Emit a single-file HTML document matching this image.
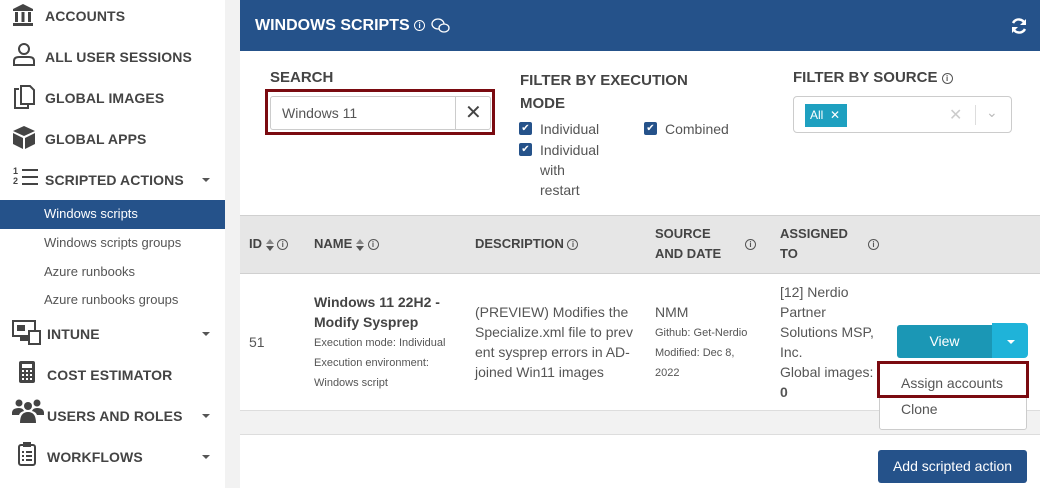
<!DOCTYPE html>
<html><head><meta charset="utf-8"><style>
*{box-sizing:border-box;margin:0;padding:0}
body{width:1040px;height:488px;overflow:hidden;font-family:"Liberation Sans",sans-serif;color:#444;background:#fff;position:relative}
.abs{position:absolute}
.side{left:0;top:0;width:225px;height:488px;background:#fff}
.gap{left:225px;top:0;width:15px;height:488px;background:#f2f2f2}
.nav{position:absolute;left:45px;font-weight:bold;font-size:14px;color:#444;letter-spacing:0.1px}
.sub{position:absolute;left:44px;font-size:13px;color:#555}
.caret{position:absolute;left:202px;width:0;height:0;border-left:4px solid transparent;border-right:4px solid transparent;border-top:4px solid #555}
.ic{position:absolute;left:12px}
.hdr{left:240px;top:0;width:800px;height:51px;background:#25528a;color:#fff}
.lbl{font-weight:bold;font-size:15px;color:#444;position:absolute}
.th{position:absolute;font-weight:bold;font-size:13px;color:#444;line-height:20px}
.info{display:inline-block;width:11px;height:11px;border:1px solid #555;border-radius:50%;font-size:8px;line-height:9px;text-align:center;font-weight:bold;vertical-align:middle;color:#555}
.cb{position:absolute;width:13px;height:13px;background:#25528a;border-radius:2px;color:#fff;font-size:10px;line-height:13px;text-align:center}
.t{position:absolute;font-size:14px;color:#555;line-height:20px}
.s{position:absolute;font-size:11px;color:#555;line-height:20px}
.sort{display:inline-block;vertical-align:middle;width:8px;height:12px;position:relative}
.sort:before{content:"";position:absolute;left:0;top:0;border-left:4px solid transparent;border-right:4px solid transparent;border-bottom:5px solid #888}
.sort:after{content:"";position:absolute;left:0;top:7px;border-left:4px solid transparent;border-right:4px solid transparent;border-top:5px solid #555}
</style></head><body>
<div class="abs side"></div><div class="abs gap"></div>
<svg class="ic" style="top:3px" width="22" height="24" viewBox="0 0 22 24"><path d="M11 1 L21 6 L21 8 L1 8 L1 6Z" fill="#444"/><rect x="3" y="9" width="3" height="10" fill="#444"/><rect x="9.5" y="9" width="3" height="10" fill="#444"/><rect x="16" y="9" width="3" height="10" fill="#444"/><rect x="1" y="20" width="20" height="3" fill="#444"/></svg>
<div class="nav" style="top:8px">ACCOUNTS</div>
<svg class="ic" style="top:42px" width="24" height="24" viewBox="0 0 24 24"><circle cx="12" cy="7" r="5" fill="none" stroke="#444" stroke-width="2"/><path d="M2 23 V19 Q2 15 7 15 H17 Q22 15 22 19 V23Z" fill="none" stroke="#444" stroke-width="2"/></svg>
<div class="nav" style="top:49px">ALL USER SESSIONS</div>
<svg class="ic" style="top:84px" width="24" height="26" viewBox="0 0 24 26"><path d="M7 5 H3 V24 H16 V21" fill="none" stroke="#444" stroke-width="2"/><path d="M9 2 H18 L22 6 V20 H9Z" fill="none" stroke="#444" stroke-width="2"/></svg>
<div class="nav" style="top:90px">GLOBAL IMAGES</div>
<svg class="ic" style="top:124px" width="24" height="26" viewBox="0 0 24 26"><path d="M12 2 L23 7 L12 12 L1 7Z M1 9 L11 14 V25 L1 20Z M23 9 L13 14 V25 L23 20Z" fill="#444"/></svg>
<div class="nav" style="top:131px">GLOBAL APPS</div>
<div class="abs" style="left:13px;top:166px;font-size:9px;font-weight:bold;line-height:10px;color:#444">1<br>2</div>
<svg class="ic" style="top:167px;left:22px" width="16" height="20"><rect x="0" y="2" width="16" height="2" fill="#444"/><rect x="0" y="9" width="16" height="2" fill="#444"/><rect x="0" y="16" width="16" height="2" fill="#444"/></svg>
<div class="nav" style="top:172px">SCRIPTED ACTIONS</div><div class="caret" style="top:178px"></div>
<div class="abs" style="left:0;top:200px;width:225px;height:29px;background:#25528a"></div>
<div class="sub" style="top:206px;color:#fff">Windows scripts</div>
<div class="sub" style="top:235px">Windows scripts groups</div>
<div class="sub" style="top:264px">Azure runbooks</div>
<div class="sub" style="top:292px">Azure runbooks groups</div>
<svg class="ic" style="top:320px" width="30" height="26" viewBox="0 0 30 26"><rect x="1" y="1" width="22" height="15" fill="none" stroke="#444" stroke-width="2"/><rect x="8" y="17" width="8" height="4" fill="#444"/><rect x="5" y="5" width="8" height="6" fill="#444"/><rect x="17" y="11" width="11" height="13" fill="#fff" stroke="#444" stroke-width="2"/></svg>
<div class="nav" style="top:326px;left:47px">INTUNE</div><div class="caret" style="top:332px"></div>
<svg class="ic" style="top:360px;left:18px" width="18" height="24" viewBox="0 0 18 24"><rect x="1" y="1" width="16" height="22" rx="2" fill="#444"/><rect x="4" y="4" width="10" height="4" fill="#fff"/><g fill="#fff"><rect x="4" y="10" width="2" height="2"/><rect x="8" y="10" width="2" height="2"/><rect x="12" y="10" width="2" height="2"/><rect x="4" y="14" width="2" height="2"/><rect x="8" y="14" width="2" height="2"/><rect x="12" y="14" width="2" height="2"/><rect x="4" y="18" width="2" height="2"/><rect x="8" y="18" width="2" height="2"/><rect x="12" y="18" width="2" height="2"/></g></svg>
<div class="nav" style="top:367px;left:47px">COST ESTIMATOR</div>
<svg class="ic" style="top:398px" width="32" height="28" viewBox="0 0 32 28"><circle cx="7" cy="5" r="3.5" fill="#444"/><circle cx="25" cy="5" r="3.5" fill="#444"/><circle cx="16" cy="8" r="4" fill="#444"/><path d="M0 15 Q0 10 7 10 Q11 10 12 13 Q8 14 7 17 H0Z M32 15 Q32 10 25 10 Q21 10 20 13 Q24 14 25 17 H32Z M8 25 Q8 14 16 14 Q24 14 24 25Z" fill="#444"/></svg>
<div class="nav" style="top:408px;left:47px">USERS AND ROLES</div><div class="caret" style="top:414px"></div>
<svg class="ic" style="top:441px;left:17px" width="20" height="26" viewBox="0 0 20 26"><rect x="2" y="4" width="16" height="20" rx="2" fill="none" stroke="#444" stroke-width="2"/><rect x="6" y="1" width="8" height="5" fill="#444"/><g fill="#444"><rect x="5" y="10" width="2" height="2"/><rect x="9" y="10" width="6" height="2"/><rect x="5" y="14" width="2" height="2"/><rect x="9" y="14" width="6" height="2"/><rect x="5" y="18" width="2" height="2"/><rect x="9" y="18" width="6" height="2"/></g></svg>
<div class="nav" style="top:449px;left:47px">WORKFLOWS</div><div class="caret" style="top:455px"></div>

<div class="abs hdr">
<div class="abs" style="left:15px;top:17px;font-weight:bold;font-size:16px">WINDOWS SCRIPTS <span class="info" style="border-color:#fff;color:#fff">i</span>
<svg width="22" height="16" viewBox="0 0 22 16" style="vertical-align:middle"><ellipse cx="8" cy="6" rx="6" ry="5" fill="none" stroke="#fff" stroke-width="1.3"/><ellipse cx="14" cy="10" rx="5" ry="4" fill="#25528a" stroke="#fff" stroke-width="1.3"/></svg></div>
<svg class="abs" style="left:770px;top:17px" width="18" height="18" viewBox="0 0 18 18"><path d="M15 7 A6.5 6.5 0 0 0 3 6 M3 11 A6.5 6.5 0 0 0 15 12" fill="none" stroke="#fff" stroke-width="2.5"/><path d="M16 2 V8 H10Z M2 16 V10 H8Z" fill="#fff"/></svg>
</div>

<div class="lbl" style="left:270px;top:69px">SEARCH</div>
<div class="abs" style="left:265px;top:89px;width:230px;height:46px;border:3px solid #7a0a10"></div>
<div class="abs" style="left:270px;top:96px;width:221px;height:34px;border:1px solid #ccc;border-radius:3px"></div>
<div class="abs" style="left:455px;top:97px;width:1px;height:32px;background:#ccc"></div>
<div class="t" style="left:282px;top:103px">Windows 11</div>
<div class="abs" style="left:465px;top:100px;font-size:20px;color:#444">✕</div>
<div class="lbl" style="left:520px;top:69px;line-height:23px">FILTER BY EXECUTION<br>MODE</div>
<div class="cb" style="left:519px;top:122px">✔</div><div class="t" style="left:540px;top:119px">Individual</div>
<div class="cb" style="left:644px;top:122px">✔</div><div class="t" style="left:665px;top:119px">Combined</div>
<div class="cb" style="left:519px;top:143px">✔</div><div class="t" style="left:540px;top:140px">Individual<br>with<br>restart</div>
<div class="lbl" style="left:793px;top:69px">FILTER BY SOURCE <span class="info">i</span></div>
<div class="abs" style="left:793px;top:96px;width:219px;height:37px;border:1px solid #ccc;border-radius:4px"></div>
<div class="abs" style="left:805px;top:104px;width:42px;height:23px;background:#1ea0c0;color:#fff;font-size:12px;line-height:23px;padding-left:5px">All&nbsp; ✕</div>
<div class="abs" style="left:949px;top:105px;color:#ccc;font-size:16px">✕</div>
<div class="abs" style="left:975px;top:105px;width:1px;height:20px;background:#ddd"></div>
<div class="abs" style="left:986px;top:104px;color:#bbb;font-size:14px">⌄</div>

<div class="abs" style="left:240px;top:215px;width:800px;height:59px;background:#e6e6e6;border-top:1px solid #d0d0d0;border-bottom:1px solid #d0d0d0"></div>
<div class="th" style="left:249px;top:234px">ID <span class="sort"></span> <span class="info">i</span></div>
<div class="th" style="left:314px;top:234px">NAME <span class="sort"></span> <span class="info">i</span></div>
<div class="th" style="left:475px;top:234px">DESCRIPTION <span class="info">i</span></div>
<div class="th" style="left:655px;top:224px">SOURCE<br>AND DATE</div><div class="th" style="left:745px;top:234px"><span class="info">i</span></div>
<div class="th" style="left:780px;top:224px">ASSIGNED<br>TO</div><div class="th" style="left:868px;top:234px"><span class="info">i</span></div>

<div class="t" style="left:249px;top:332px">51</div>
<div class="abs" style="left:314px;top:292px;font-weight:bold;font-size:14px;line-height:20px;color:#444">Windows 11 22H2 -<br>Modify Sysprep</div>
<div class="s" style="left:314px;top:333px">Execution mode: Individual<br>Execution environment:<br>Windows script</div>
<div class="t" style="left:475px;top:302px">(PREVIEW) Modifies the<br>Specialize.xml file to prev<br>ent sysprep errors in AD-<br>joined Win11 images</div>
<div class="t" style="left:655px;top:302px">NMM</div>
<div class="s" style="left:655px;top:323px">Github: Get-Nerdio<br>Modified: Dec 8,<br>2022</div>
<div class="t" style="left:780px;top:282px">[12] Nerdio<br>Partner<br>Solutions MSP,<br>Inc.<br>Global images:<br><b>0</b></div>
<div class="abs" style="left:897px;top:325px;width:95px;height:33px;background:#1b97b5;color:#fff;font-size:14px;line-height:33px;text-align:center;border-radius:3px 0 0 3px">View</div>
<div class="abs" style="left:992px;top:323px;width:36px;height:35px;background:#1fb3d9;border-radius:0 4px 4px 0"></div>
<div class="caret" style="left:1007px;top:340px;border-top-color:#fff"></div>
<div class="abs" style="left:240px;top:410px;width:800px;height:25px;background:#f2f2f2;border-top:1px solid #ddd;border-bottom:1px solid #ddd"></div>
<div class="abs" style="left:879px;top:361px;width:148px;height:69px;background:#fff;border:1px solid #ccc;border-radius:3px"></div>
<div class="abs" style="left:877px;top:361px;width:152px;height:37px;border:3px solid #7a0a10"></div>
<div class="t" style="left:901px;top:373px">Assign accounts</div>
<div class="t" style="left:901px;top:399px">Clone</div>
<div class="abs" style="left:878px;top:450px;width:149px;height:33px;background:#25528a;color:#fff;font-size:14px;line-height:33px;text-align:center;border-radius:3px">Add scripted action</div>
</body></html>
